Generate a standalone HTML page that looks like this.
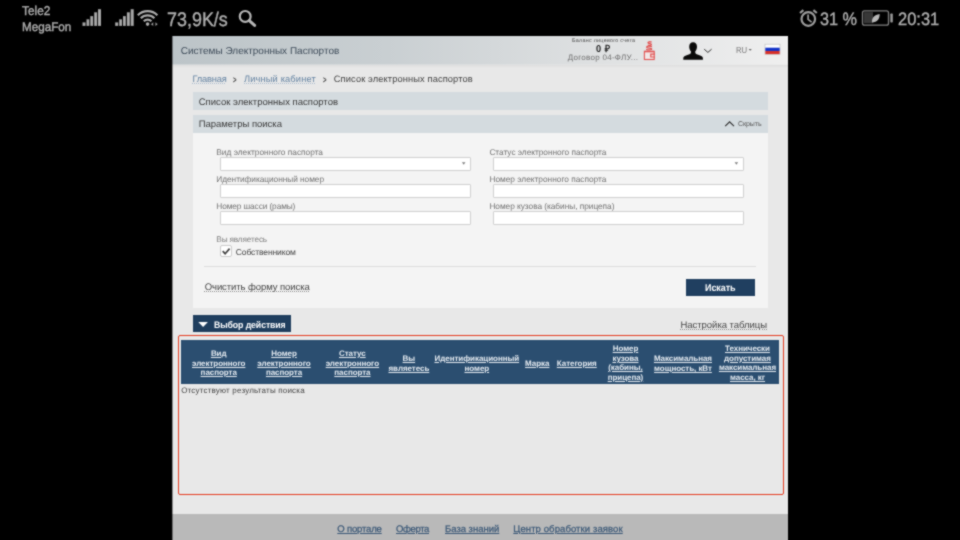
<!DOCTYPE html>
<html lang="ru">
<head>
<meta charset="utf-8">
<title>Список электронных паспортов</title>
<style>
html,body{margin:0;padding:0;background:#000;}
body{text-rendering:geometricPrecision;width:960px;height:540px;position:relative;overflow:hidden;font-family:"Liberation Sans",sans-serif;}
.a{position:absolute;box-sizing:border-box;}
.t{position:absolute;white-space:pre;line-height:1;}
.inp{position:absolute;box-sizing:border-box;background:#fff;border:1px solid #d0d0d0;border-radius:1px;height:14px;}
svg{position:absolute;overflow:visible;}
#blur{position:absolute;left:0;top:0;width:960px;height:540px;background:#000;filter:url(#soft);}
</style>
</head>
<body>
<svg width="0" height="0" style="position:absolute"><defs>
<filter id="soft" x="0" y="0" width="100%" height="100%" color-interpolation-filters="sRGB"><feConvolveMatrix order="3" kernelMatrix="1 2 1 2 10 2 1 2 1" divisor="22" edgeMode="duplicate" preserveAlpha="true"/></filter>
</defs></svg>
<div id="blur">
<!-- page -->
<div class="a" style="left:172px;top:36px;width:616px;height:504px;background:#e8e8e8;"></div>
<!-- header -->
<div class="a" style="left:172px;top:36px;width:616px;height:28px;background:linear-gradient(90deg,#bcc4c8 0%,#c9cfd2 35%,#dfe1e2 70%,#efefef 100%);"></div>
<div class="a" style="left:172px;top:64px;width:616px;height:1px;opacity:0.55;background:linear-gradient(90deg,#bcc4c8 0%,#c9cfd2 35%,#dfe1e2 70%,#efefef 100%);"></div>
<div class="a" style="left:172px;top:65px;width:616px;height:3px;background:linear-gradient(180deg,#dedede,#e8e8e8);"></div>
<!-- bars -->
<div class="a" style="left:192.5px;top:92.2px;width:575px;height:18.2px;background:#d4dbdf;"></div>
<div class="a" style="left:192.5px;top:114.8px;width:575px;height:18.2px;background:#d4dbdf;"></div>
<!-- form panel -->
<div class="a" style="left:192.5px;top:133px;width:575px;height:175px;background:#f4f4f4;"></div>
<!-- inputs -->
<div class="inp" style="left:220px;top:157px;width:251px;"></div>
<div class="inp" style="left:220px;top:184px;width:251px;"></div>
<div class="inp" style="left:220px;top:211px;width:251px;"></div>
<div class="inp" style="left:493px;top:157px;width:251px;"></div>
<div class="inp" style="left:493px;top:184px;width:251px;"></div>
<div class="inp" style="left:493px;top:211px;width:251px;"></div>
<!-- select arrows -->
<!-- checkbox -->
<div class="a" style="left:220px;top:245px;width:12px;height:12px;background:#fff;border:1px solid #cbcbcb;border-radius:2px;"></div>
<svg style="left:220px;top:245px;" width="12" height="12" viewBox="0 0 12 12"><path d="M2.7 6.2 L5.1 8.7 L9.6 3.6" fill="none" stroke="#444" stroke-width="1.7"/></svg>
<!-- divider -->
<div class="a" style="left:204px;top:266px;width:552px;height:1px;background:#dcdcdc;"></div>
<!-- search button -->
<div class="a" style="left:685.8px;top:278.8px;width:69.6px;height:16.8px;background:#203f60;"></div>
<!-- action button -->
<div class="a" style="left:192.8px;top:315px;width:98.4px;height:16.8px;background:#1f3e5e;"></div>
<!-- red outline -->
<div class="a" style="left:178px;top:334.9px;width:605.7px;height:159.8px;border:1.5px solid #e53c22;border-radius:2px;"></div>
<!-- table header -->
<div class="a" style="left:181.2px;top:340.3px;width:597.8px;height:44px;background:#2b4e70;"></div>
<!-- footer -->
<div class="a" style="left:172px;top:514.3px;width:616px;height:26px;background:#b9b9b9;"></div>

<svg style="left:0;top:0" width="960" height="540" viewBox="0 0 960 540"><path d="M461.9 162.3 h3.6 l-1.8 2.5z M734.6 162.3 h3.6 l-1.8 2.5z" fill="#808080"/><path d="M198.3 322.1 h9.6 l-4.8 4.8z" fill="#fff"/></svg>
<div class="a" style="left:172px;top:35px;width:1px;height:505px;background:rgba(0,0,0,0.4);"></div>
<!-- status bar icons -->
<svg style="left:0;top:0;" width="960" height="36" viewBox="0 0 960 36">
 <g fill="#a8a8a8">
  <rect x="82.5" y="22.4" width="3" height="3.5"/><rect x="86.5" y="19.3" width="2.8" height="6.6"/><rect x="90.3" y="16.1" width="2.8" height="9.8"/><rect x="94.2" y="12.3" width="2.9" height="13.6"/><rect x="98" y="9.2" width="3" height="16.7"/>
  <rect x="115.2" y="22.4" width="3" height="3.5"/><rect x="119.2" y="19.3" width="2.8" height="6.6"/><rect x="123" y="16.1" width="2.8" height="9.8"/><rect x="126.9" y="12.3" width="2.9" height="13.6"/><rect x="130.7" y="9.2" width="3" height="16.7"/>
 </g>
 <!-- wifi -->
 <g fill="none" stroke="#acacac" stroke-width="2.2" stroke-linecap="butt">
  <path d="M137.84 15.24 A13.8 13.8 0 0 1 157.36 15.24"/>
  <path d="M140.81 18.21 A9.6 9.6 0 0 1 154.39 18.21"/>
  <path d="M143.78 21.18 A5.4 5.4 0 0 1 151.42 21.18"/>
 </g>
 <circle cx="147.6" cy="24.1" r="1.8" fill="#acacac"/>
 <path d="M150.6 24.2 l2.800 -2.100 v4.200z M158 24.200 l-2.800 -2.100 v4.200z" fill="#acacac" stroke="#000" stroke-width="0.5"/>
 <!-- search -->
 <circle cx="245.2" cy="16.4" r="5.4" fill="none" stroke="#b6b6b6" stroke-width="2.2"/>
 <path d="M249.3 20.6 L254.6 25.4" stroke="#b6b6b6" stroke-width="3" stroke-linecap="round"/>
 <!-- alarm -->
 <circle cx="808.3" cy="19" r="6.8" fill="none" stroke="#9c9c9c" stroke-width="2.2"/>
 <path d="M808.1 14.6 V19.4 L811.6 22.2" fill="none" stroke="#9a9a9a" stroke-width="1.7"/>
 <path d="M800 13 L803.4 10.2 M813.4 10.2 L816.8 13" stroke="#9c9c9c" stroke-width="2.2"/>
 <!-- battery -->
 <rect x="862.5" y="10.8" width="26" height="14.4" rx="2" fill="none" stroke="#808080" stroke-width="1.3"/>
 <rect x="863.8" y="12.2" width="9.2" height="11" fill="#383838"/>
 <path d="M872 22.6 C871.4 18 874.5 14.8 879.6 14 C880 18.6 877.2 22.3 872 22.6z" fill="#b8b8b8"/>
 <rect x="890.3" y="13.4" width="2.5" height="9.2" rx="0.8" fill="#9a9a9a"/>
</svg>

<!-- header icons -->
<svg style="left:0;top:36px;" width="960" height="30" viewBox="0 36 960 30">
 <!-- wallet -->
 <g fill="none" stroke="#e25555" stroke-width="1.2">
  <rect x="644.4" y="51.3" width="9.8" height="8.2" fill="#f2e6e6" stroke-width="1.1"/>
  <path d="M644.4 51.6 h9.8" stroke-width="1.4"/>
  <path d="M655 54.2 H650.8 V57 H655" stroke-width="1.2"/>
  <path d="M651.6 42.2 c-1.6 -0.8 -3.6 -0.4 -3.6 0.6 c0 1.2 3.4 0.6 3.4 1.8 c0 1 -2 1.2 -3.6 0.4" stroke-width="1.3"/>
  <path d="M652 46.6 c-2 -0.9 -5.4 -0.5 -5.4 0.6 c0 1.2 5.2 0.5 5.2 1.7 c0 1.1 -3.600 1.300 -5.600 0.400" stroke-width="1.3"/>
 </g>
 <!-- user -->
 <path d="M693.1 42.3 c2.400 0 3.900 1.800 3.900 4.400 c0 1.900 -0.700 3.500 -1.700 4.500 v1.300 c0 0.800 0.500 1.300 1.500 1.700 c2.800 1 5.600 1.600 6.100 3.500 v2.100 h-19.600 v-2.100 c0.500 -1.900 3.300 -2.500 6.100 -3.500 c1 -0.400 1.500 -0.900 1.500 -1.700 v-1.300 c-1 -1 -1.700 -2.600 -1.700 -4.500 c0 -2.600 1.500 -4.400 3.900 -4.400z" fill="#0a0a0a"/>
 <path d="M704.2 49.2 L707.9 52.4 L711.6 49.2" fill="none" stroke="#333" stroke-width="1"/>
 <!-- RU caret -->
 <path d="M748.6 48.9 h3.2 l-1.6 1.9z" fill="#666"/>
 <!-- flag -->
 <rect x="765" y="44.2" width="15" height="10.2" fill="#fff" stroke="#b9b9b9" stroke-width="0.6"/>
 <rect x="765.3" y="47.7" width="14.4" height="3.3" fill="#1434c8"/>
 <rect x="765.3" y="51" width="14.4" height="3.1" fill="#d6302a"/>
 <!-- collapse chevron -->
 <path d="M725.2 126.2 L729.6 121.8 L734 126.2" fill="none" stroke="#333" stroke-width="1.2"/>
</svg>

<span class="t" style="left:21.7px;top:5px;font-size:12.8px;color:#adadad;letter-spacing:0.000px;-webkit-text-stroke:0.4px #adadad;transform:scaleX(0.9250);transform-origin:0 0;">Tele2</span>
<span class="t" style="left:21.7px;top:21px;font-size:12.4px;color:#adadad;letter-spacing:0.000px;-webkit-text-stroke:0.4px #adadad;transform:scaleX(0.9416);transform-origin:0 0;">MegaFon</span>
<span class="t" style="left:166.8px;top:11px;font-size:19.6px;color:#adadad;letter-spacing:0.000px;-webkit-text-stroke:0.4px #adadad;transform:scaleX(0.9149);transform-origin:0 0;">73,9K/s</span>
<span class="t" style="left:820.0px;top:10px;font-size:18px;color:#adadad;letter-spacing:0.000px;-webkit-text-stroke:0.4px #adadad;transform:scaleX(0.9018);transform-origin:0 0;">31 %</span>
<span class="t" style="left:898.3px;top:10px;font-size:18px;color:#adadad;letter-spacing:0.000px;-webkit-text-stroke:0.4px #adadad;transform:scaleX(0.9146);transform-origin:0 0;">20:31</span>
<span class="t" style="left:180.8px;top:47px;font-size:10px;color:#3c4a58;letter-spacing:-0.002px;">Системы Электронных Паспортов</span>
<span class="t" style="left:572.0px;top:39px;font-size:5.4px;color:#505050;letter-spacing:0.260px;">Баланс лицевого счета</span>
<span class="t" style="left:596.2px;top:45px;font-size:10px;color:#222;font-weight:700;letter-spacing:0.638px;transform:scaleX(0.9200);transform-origin:0 0;">0 ₽</span>
<span class="t" style="left:567.8px;top:54px;font-size:8px;color:#6e6e6e;letter-spacing:0.279px;">Договор 04-ФЛУ...</span>
<span class="t" style="left:735.8px;top:46px;font-size:8.8px;color:#777;letter-spacing:0.000px;transform:scaleX(0.8806);transform-origin:0 0;">RU</span>
<a class="t" style="left:192.5px;top:75px;font-size:9.3px;color:#6483a2;letter-spacing:-0.170px;text-decoration:underline dotted;text-underline-offset:1px;text-decoration-thickness:1px;text-decoration-color:#a9bace;">Главная</a>
<span class="t" style="left:233.4px;top:76px;font-size:9.5px;color:#4a4a4a;font-weight:700;letter-spacing:0.000px;transform:scaleX(0.6292);transform-origin:0 0;">&gt;</span>
<a class="t" style="left:244.0px;top:75px;font-size:9.3px;color:#6483a2;letter-spacing:0.132px;text-decoration:underline dotted;text-underline-offset:1px;text-decoration-thickness:1px;text-decoration-color:#a9bace;">Личный кабинет</a>
<span class="t" style="left:323.4px;top:76px;font-size:9.5px;color:#4a4a4a;font-weight:700;letter-spacing:0.000px;transform:scaleX(0.6292);transform-origin:0 0;">&gt;</span>
<span class="t" style="left:333.8px;top:75px;font-size:9.3px;color:#444;letter-spacing:0.111px;">Список электронных паспортов</span>
<span class="t" style="left:198.7px;top:98px;font-size:9.5px;color:#3a3a3a;letter-spacing:0.016px;">Список электронных паспортов</span>
<span class="t" style="left:198.7px;top:120px;font-size:9.5px;color:#3a3a3a;letter-spacing:-0.008px;">Параметры поиска</span>
<span class="t" style="left:738.0px;top:121px;font-size:7px;color:#5a5a5a;letter-spacing:-0.051px;">Скрыть</span>
<label class="t" style="left:216.3px;top:148px;font-size:8.3px;color:#727272;letter-spacing:0.019px;">Вид электронного паспорта</label>
<label class="t" style="left:216.3px;top:175px;font-size:8.3px;color:#727272;letter-spacing:-0.036px;">Идентификационный номер</label>
<label class="t" style="left:216.3px;top:202px;font-size:8.3px;color:#727272;letter-spacing:-0.099px;">Номер шасси (рамы)</label>
<label class="t" style="left:489.4px;top:148px;font-size:8.3px;color:#727272;letter-spacing:-0.016px;">Статус электронного паспорта</label>
<label class="t" style="left:489.4px;top:175px;font-size:8.3px;color:#727272;letter-spacing:0.009px;">Номер электронного паспорта</label>
<label class="t" style="left:489.4px;top:202px;font-size:8.3px;color:#727272;letter-spacing:-0.030px;">Номер кузова (кабины, прицепа)</label>
<label class="t" style="left:216.3px;top:236px;font-size:8.2px;color:#808080;letter-spacing:-0.132px;">Вы являетесь</label>
<label class="t" style="left:235.8px;top:248px;font-size:8.5px;color:#444;letter-spacing:-0.112px;">Собственником</label>
<a class="t" style="left:204.7px;top:283px;font-size:9.5px;color:#444;letter-spacing:-0.074px;text-decoration:underline dotted;text-underline-offset:1px;text-decoration-thickness:1px;text-decoration-color:#8a8a8a;">Очистить форму поиска</a>
<span class="t" style="left:705.3px;top:284px;font-size:10px;color:#fff;font-weight:700;letter-spacing:-0.081px;transform:scaleX(0.9000);transform-origin:0 0;">Искать</span>
<span class="t" style="left:213.7px;top:321px;font-size:9.5px;color:#fff;font-weight:700;letter-spacing:-0.113px;transform:scaleX(0.9200);transform-origin:0 0;">Выбор действия</span>
<a class="t" style="left:680.5px;top:321px;font-size:9.5px;color:#444;letter-spacing:-0.034px;text-decoration:underline dotted;text-underline-offset:1px;text-decoration-thickness:1px;text-decoration-color:#8a8a8a;">Настройка таблицы</a>
<a class="t" style="left:210.9px;top:350px;font-size:8px;color:#e4eaf0;font-weight:700;letter-spacing:-0.050px;text-decoration:underline solid;text-underline-offset:1px;text-decoration-thickness:1px;">Вид</a>
<a class="t" style="left:192.0px;top:360px;font-size:8px;color:#e4eaf0;font-weight:700;letter-spacing:-0.050px;text-decoration:underline solid;text-underline-offset:1px;text-decoration-thickness:1px;">электронного</a>
<a class="t" style="left:200.6px;top:369px;font-size:8px;color:#e4eaf0;font-weight:700;letter-spacing:-0.050px;text-decoration:underline solid;text-underline-offset:1px;text-decoration-thickness:1px;">паспорта</a>
<a class="t" style="left:271.2px;top:350px;font-size:8px;color:#e4eaf0;font-weight:700;letter-spacing:-0.050px;text-decoration:underline solid;text-underline-offset:1px;text-decoration-thickness:1px;">Номер</a>
<a class="t" style="left:257.3px;top:360px;font-size:8px;color:#e4eaf0;font-weight:700;letter-spacing:-0.050px;text-decoration:underline solid;text-underline-offset:1px;text-decoration-thickness:1px;">электронного</a>
<a class="t" style="left:265.9px;top:369px;font-size:8px;color:#e4eaf0;font-weight:700;letter-spacing:-0.050px;text-decoration:underline solid;text-underline-offset:1px;text-decoration-thickness:1px;">паспорта</a>
<a class="t" style="left:339.0px;top:350px;font-size:8px;color:#e4eaf0;font-weight:700;letter-spacing:-0.050px;text-decoration:underline solid;text-underline-offset:1px;text-decoration-thickness:1px;">Статус</a>
<a class="t" style="left:325.7px;top:360px;font-size:8px;color:#e4eaf0;font-weight:700;letter-spacing:-0.050px;text-decoration:underline solid;text-underline-offset:1px;text-decoration-thickness:1px;">электронного</a>
<a class="t" style="left:334.3px;top:369px;font-size:8px;color:#e4eaf0;font-weight:700;letter-spacing:-0.050px;text-decoration:underline solid;text-underline-offset:1px;text-decoration-thickness:1px;">паспорта</a>
<a class="t" style="left:402.6px;top:355px;font-size:8px;color:#e4eaf0;font-weight:700;letter-spacing:-0.050px;text-decoration:underline solid;text-underline-offset:1px;text-decoration-thickness:1px;">Вы</a>
<a class="t" style="left:388.5px;top:365px;font-size:8px;color:#e4eaf0;font-weight:700;letter-spacing:-0.050px;text-decoration:underline solid;text-underline-offset:1px;text-decoration-thickness:1px;">являетесь</a>
<a class="t" style="left:434.5px;top:355px;font-size:8px;color:#e4eaf0;font-weight:700;letter-spacing:-0.050px;text-decoration:underline solid;text-underline-offset:1px;text-decoration-thickness:1px;">Идентификационный</a>
<a class="t" style="left:464.5px;top:365px;font-size:8px;color:#e4eaf0;font-weight:700;letter-spacing:-0.050px;text-decoration:underline solid;text-underline-offset:1px;text-decoration-thickness:1px;">номер</a>
<a class="t" style="left:525.1px;top:360px;font-size:8px;color:#e4eaf0;font-weight:700;letter-spacing:-0.050px;text-decoration:underline solid;text-underline-offset:1px;text-decoration-thickness:1px;">Марка</a>
<a class="t" style="left:556.8px;top:360px;font-size:8px;color:#e4eaf0;font-weight:700;letter-spacing:-0.050px;text-decoration:underline solid;text-underline-offset:1px;text-decoration-thickness:1px;">Категория</a>
<a class="t" style="left:612.7px;top:345px;font-size:8px;color:#e4eaf0;font-weight:700;letter-spacing:-0.050px;text-decoration:underline solid;text-underline-offset:1px;text-decoration-thickness:1px;">Номер</a>
<a class="t" style="left:612.5px;top:355px;font-size:8px;color:#e4eaf0;font-weight:700;letter-spacing:-0.050px;text-decoration:underline solid;text-underline-offset:1px;text-decoration-thickness:1px;">кузова</a>
<a class="t" style="left:608.2px;top:364px;font-size:8px;color:#e4eaf0;font-weight:700;letter-spacing:-0.050px;text-decoration:underline solid;text-underline-offset:1px;text-decoration-thickness:1px;">(кабины,</a>
<a class="t" style="left:607.7px;top:374px;font-size:8px;color:#e4eaf0;font-weight:700;letter-spacing:-0.050px;text-decoration:underline solid;text-underline-offset:1px;text-decoration-thickness:1px;">прицепа)</a>
<a class="t" style="left:653.9px;top:355px;font-size:8px;color:#e4eaf0;font-weight:700;letter-spacing:-0.050px;text-decoration:underline solid;text-underline-offset:1px;text-decoration-thickness:1px;">Максимальная</a>
<a class="t" style="left:654.1px;top:365px;font-size:8px;color:#e4eaf0;font-weight:700;letter-spacing:-0.050px;text-decoration:underline solid;text-underline-offset:1px;text-decoration-thickness:1px;">мощность, кВт</a>
<a class="t" style="left:725.0px;top:345px;font-size:8px;color:#e4eaf0;font-weight:700;letter-spacing:-0.050px;text-decoration:underline solid;text-underline-offset:1px;text-decoration-thickness:1px;">Технически</a>
<a class="t" style="left:724.1px;top:355px;font-size:8px;color:#e4eaf0;font-weight:700;letter-spacing:-0.050px;text-decoration:underline solid;text-underline-offset:1px;text-decoration-thickness:1px;">допустимая</a>
<a class="t" style="left:718.9px;top:364px;font-size:8px;color:#e4eaf0;font-weight:700;letter-spacing:-0.050px;text-decoration:underline solid;text-underline-offset:1px;text-decoration-thickness:1px;">максимальная</a>
<a class="t" style="left:730.0px;top:374px;font-size:8px;color:#e4eaf0;font-weight:700;letter-spacing:-0.050px;text-decoration:underline solid;text-underline-offset:1px;text-decoration-thickness:1px;">масса, кг</a>
<span class="t" style="left:181.2px;top:387px;font-size:8px;color:#444;letter-spacing:0.193px;">Отсутствуют результаты поиска</span>
<a class="t" style="left:337.3px;top:525px;font-size:9.5px;color:#3b5877;letter-spacing:-0.166px;text-decoration:underline solid;text-underline-offset:1px;text-decoration-thickness:1px;-webkit-text-stroke:0.25px #3b5877;">О портале</a>
<a class="t" style="left:396.0px;top:525px;font-size:9.5px;color:#3b5877;letter-spacing:-0.349px;text-decoration:underline solid;text-underline-offset:1px;text-decoration-thickness:1px;-webkit-text-stroke:0.25px #3b5877;">Оферта</a>
<a class="t" style="left:445.0px;top:525px;font-size:9.5px;color:#3b5877;letter-spacing:-0.013px;text-decoration:underline solid;text-underline-offset:1px;text-decoration-thickness:1px;-webkit-text-stroke:0.25px #3b5877;">База знаний</a>
<a class="t" style="left:513.3px;top:525px;font-size:9.5px;color:#3b5877;letter-spacing:0.097px;text-decoration:underline solid;text-underline-offset:1px;text-decoration-thickness:1px;-webkit-text-stroke:0.25px #3b5877;">Центр обработки заявок</a>
</div>
</body>
</html>
